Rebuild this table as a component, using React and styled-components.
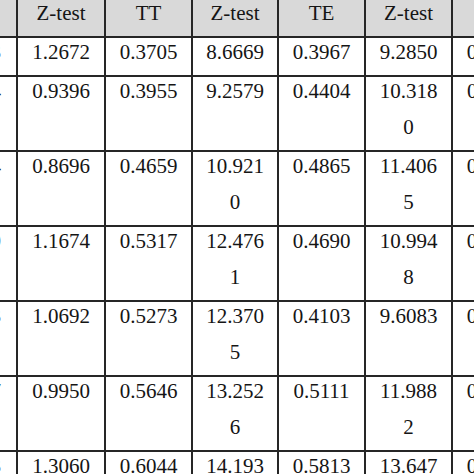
import React from "react";
import styled, { createGlobalStyle } from "styled-components";

const Global = createGlobalStyle`
  html, body { margin: 0; padding: 0; background: #ffffff; }
  body { font-family: "Liberation Serif", "Times New Roman", serif; }
`;

const Page = styled.div`
  width: 474px;
  height: 474px;
  overflow: hidden;
  background: #ffffff;
`;

const Table = styled.table`
  border-collapse: collapse;
  table-layout: fixed;
  width: ${(p) => p.$width}px;
  margin: -3px 0 0 -72px;
  font-family: "Liberation Serif", "Times New Roman", serif;
  font-size: 21px;
  color: #151515;
`;

const Col = styled.col`
  width: ${(p) => p.$w}px;
`;

const Cell = styled.td`
  border: 2px solid #262626;
  padding: 0 0 1px 0;
  vertical-align: top;
  text-align: ${(p) => (p.$label ? "right" : "center")};
  padding-right: ${(p) => (p.$label ? "15px" : "0")};
  background: ${(p) => (p.$head ? "#d9d9d9" : "#ffffff")};
  font-weight: normal;
  overflow: hidden;
  white-space: nowrap;
`;

const Line = styled.span`
  display: block;
  line-height: 28px;
  height: 28px;
  margin-bottom: 8px;
`;

const header = ["N", "Z-test", "TT", "Z-test", "TE", "Z-test", "TS"];

const rows = [
  ["N=1003", ["1.2672"], ["0.3705"], ["8.6669"], ["0.3967"], ["9.2850"], ["0.4123"]],
  ["N=2004", ["0.9396"], ["0.3955"], ["9.2579"], ["0.4404"], ["10.318", "0"], ["0.4511"]],
  ["N=3004", ["0.8696"], ["0.4659"], ["10.921", "0"], ["0.4865"], ["11.406", "5"], ["0.4932"]],
  ["N=4009", ["1.1674"], ["0.5317"], ["12.476", "1"], ["0.4690"], ["10.994", "8"], ["0.4874"]],
  ["N=5003", ["1.0692"], ["0.5273"], ["12.370", "5"], ["0.4103"], ["9.6083"], ["0.4425"]],
  ["N=6007", ["0.9950"], ["0.5646"], ["13.252", "6"], ["0.5111"], ["11.988", "2"], ["0.5238"]],
  ["N=7003", ["1.3060"], ["0.6044"], ["14.193", "3"], ["0.5813"], ["13.647", "7"], ["0.5902"]],
];

const widths = [88, 88, 87, 86, 87, 87, 87];

export default function App() {
  const total = widths.reduce((a, b) => a + b, 0);
  return (
    <Page>
      <Global />
      <Table $width={total}>
        <colgroup>
          {widths.map((w, i) => (
            <Col key={i} $w={w} />
          ))}
        </colgroup>
        <thead>
          <tr>
            {header.map((h, i) => (
              <Cell as="th" key={i} $head>
                <Line>{h}</Line>
              </Cell>
            ))}
          </tr>
        </thead>
        <tbody>
          {rows.map((r, ri) => (
            <tr key={ri}>
              {r.map((c, ci) =>
                ci === 0 ? (
                  <Cell key={ci} $label>
                    <Line>{c}</Line>
                  </Cell>
                ) : (
                  <Cell key={ci}>
                    {c.map((l, li) => (
                      <Line key={li}>{l}</Line>
                    ))}
                  </Cell>
                )
              )}
            </tr>
          ))}
        </tbody>
      </Table>
    </Page>
  );
}
